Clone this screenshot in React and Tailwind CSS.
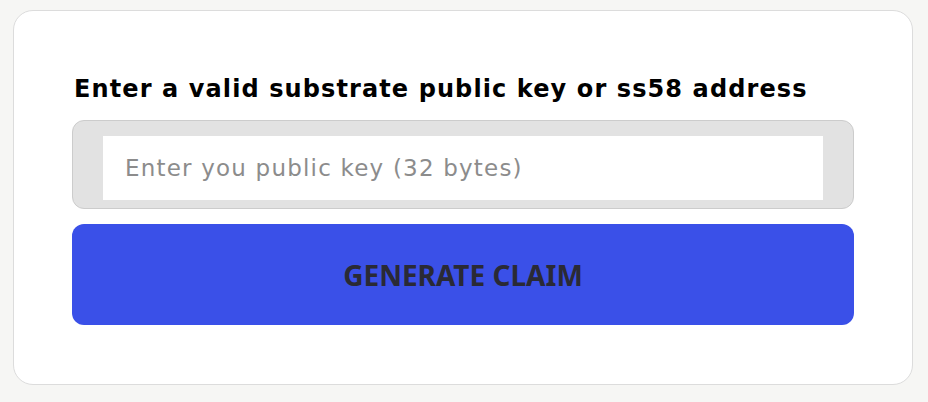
import React from "react";

const App = () => {
  return (
    <div className="min-h-screen w-full bg-[#f6f6f4] pt-[10px] pl-[13px]">
      <div className="w-[900px] h-[375px] bg-white border border-[#dcdcdc] rounded-[20px] px-[58px] pt-[63px]">
        <h2 className="pl-[2px] text-[24px] leading-[30px] font-bold text-black tracking-[1.1px] [font-family:'DejaVu_Sans',sans-serif]">
          Enter a valid substrate public key or ss58 address
        </h2>

        {/* KEY INPUT */}
        <div className="mt-[16px] h-[89px] bg-[#e2e2e2] border border-[#cccccc] rounded-[12px] pl-[30px] pr-[30px] pt-[15px] pb-[8px]">
          <input
            type="text"
            placeholder="Enter you public key (32 bytes)"
            className="w-full h-full bg-white px-[22px] text-[23px] tracking-[1.2px] text-black placeholder:text-[#8c8c8c] outline-none [font-family:'DejaVu_Sans',sans-serif]"
          />
        </div>

        <button className="mt-[15px] w-full h-[101px] bg-[#3a50e8] rounded-[12px] text-[28px] font-bold text-[#2a2a35] [font-family:'Noto_Sans',sans-serif]">
          GENERATE CLAIM
        </button>
      </div>
    </div>
  );
};

export default App;
